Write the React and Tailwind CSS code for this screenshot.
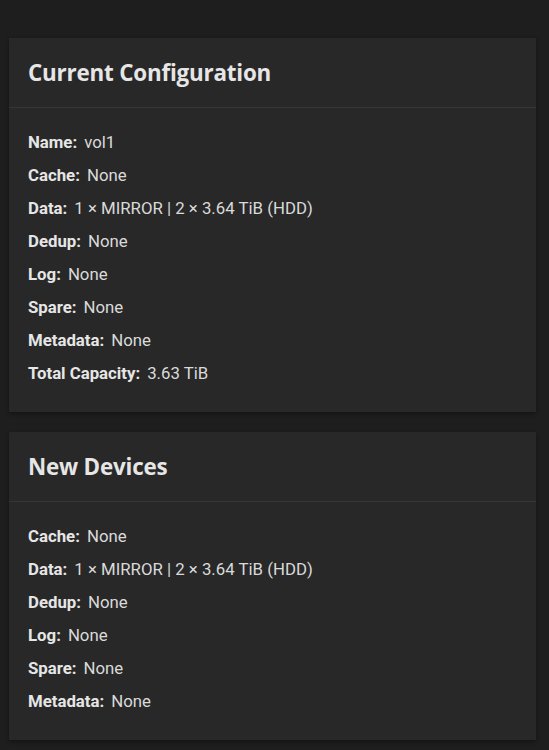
import React from "react";

const current = [
  ["Name:", "vol1"],
  ["Cache:", "None"],
  ["Data:", "1 × MIRROR | 2 × 3.64 TiB (HDD)"],
  ["Dedup:", "None"],
  ["Log:", "None"],
  ["Spare:", "None"],
  ["Metadata:", "None"],
  ["Total Capacity:", "3.63 TiB"],
];

const added = [
  ["Cache:", "None"],
  ["Data:", "1 × MIRROR | 2 × 3.64 TiB (HDD)"],
  ["Dedup:", "None"],
  ["Log:", "None"],
  ["Spare:", "None"],
  ["Metadata:", "None"],
];

const Card = ({ title, rows }) => (
  <div className="bg-[#282828] shadow-[0_2px_4px_rgba(0,0,0,0.35)]">
    <div className="h-[70px] flex items-center px-[19px] border-b border-[#363636]">
      <h2 className="text-[22.4px] font-bold text-[#e6e6e6] font-['Open_Sans',sans-serif] tracking-[-0.2px]">
        {title}
      </h2>
    </div>
    <div className="px-[19px] pt-[18px] pb-[22px] flex flex-col">
      {rows.map(([label, value]) => (
        <p key={label} className="h-[33px] flex items-center text-[16.8px] font-['Roboto',sans-serif]">
          <span className="font-bold text-[#e6e6e6]">{label}</span>
          <span className="ml-[7px] text-[#dadada]">{value}</span>
        </p>
      ))}
    </div>
  </div>
);

export default function App() {
  return (
    <div className="min-h-[750px] bg-[#1e1e1e] pt-[38px] pl-[9px] pr-[13px] pb-[10px] flex flex-col gap-[20px]">
      <Card title="Current Configuration" rows={current} />
      <Card title="New Devices" rows={added} />
    </div>
  );
}
